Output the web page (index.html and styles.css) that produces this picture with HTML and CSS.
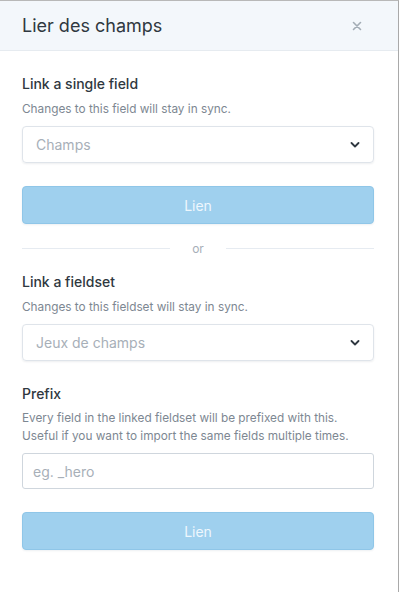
FILE: index.html
```html
<!DOCTYPE html>
<html lang="fr">
<head>
<meta charset="utf-8">
<title>Lier des champs</title>
<link rel="stylesheet" href="styles.css">
</head>
<body>
<div class="modal">
  <div class="modal-header">
    <h1 class="modal-title">Lier des champs</h1>
    <button class="close" aria-label="Fermer">
      <svg width="10" height="10" viewBox="0 0 10 10"><path d="M1.5 1.5 L8.5 8.5 M8.5 1.5 L1.5 8.5" stroke="#a3acb5" stroke-width="1.6" stroke-linecap="round" fill="none"/></svg>
    </button>
  </div>
  <div class="modal-body">
    <section class="group">
      <h2 class="label">Link a single field</h2>
      <p class="help">Changes to this field will stay in sync.</p>
      <div class="select">
        <span class="placeholder">Champs</span>
        <svg class="chev" width="10" height="6" viewBox="0 0 10 6"><path d="M1.5 1 L5 4.5 L8.5 1" stroke="#2f3840" stroke-width="1.8" fill="none" stroke-linecap="round" stroke-linejoin="round"/></svg>
      </div>
      <button class="btn">Lien</button>
    </section>

    <div class="divider"><span class="line"></span><span class="or">or</span><span class="line"></span></div>

    <section class="group">
      <h2 class="label">Link a fieldset</h2>
      <p class="help">Changes to this fieldset will stay in sync.</p>
      <div class="select">
        <span class="placeholder">Jeux de champs</span>
        <svg class="chev" width="10" height="6" viewBox="0 0 10 6"><path d="M1.5 1 L5 4.5 L8.5 1" stroke="#2f3840" stroke-width="1.8" fill="none" stroke-linecap="round" stroke-linejoin="round"/></svg>
      </div>
      <h2 class="label label-prefix">Prefix</h2>
      <p class="help help-multi">Every field in the linked fieldset will be prefixed with this.<br>Useful if you want to import the same fields multiple times.</p>
      <input class="input" type="text" placeholder="eg. _hero">
      <button class="btn">Lien</button>
    </section>
  </div>
</div>
</body>
</html>
```

FILE: styles.css
```css
* { box-sizing: border-box; }
html, body { margin: 0; padding: 0; background: #ffffff; }
body {
  font-family: Inter, "Noto Sans", "Liberation Sans", sans-serif;
  color: #2f3840;
  width: 399px;
  height: 592px;
  overflow: hidden;
}
.modal {
  width: 399px;
  height: 592px;
  border-top: 1px solid #b8b8b8;
  border-right: 1px solid #a9a9a9;
  background: #ffffff;
}
.modal-header {
  height: 50px;
  background: #f3f7fb;
  border-bottom: 1px solid #e6ebf0;
  display: flex;
  align-items: center;
  justify-content: space-between;
  padding: 0 36px 0 22px;
}
.modal-title {
  margin: 0;
  font-size: 18px;
  line-height: 24px;
  font-weight: 400;
  color: #2f3840;
}
.close {
  border: 0;
  background: none;
  padding: 0;
  width: 10px;
  height: 10px;
  display: flex;
}
.modal-body {
  padding: 23px 24px 23px 22px;
}
.group { display: flex; flex-direction: column; }
.label {
  margin: 0 0 6px;
  font-size: 14px;
  line-height: 20px;
  font-weight: 500;
  color: #2f3840;
}
.help {
  margin: 0 0 8px;
  font-size: 11.8px;
  line-height: 18px;
  color: #7d8792;
}
.select {
  height: 37px;
  border: 1px solid #dfe4ea;
  border-radius: 4px;
  box-shadow: 0 1px 2px rgba(30, 40, 60, 0.08);
  display: flex;
  align-items: center;
  justify-content: space-between;
  padding: 0 13px 0 13px;
}
.placeholder {
  font-size: 14px;
  color: #a7afb8;
}
.chev { display: block; }
.btn {
  margin-top: 23px;
  height: 38px;
  width: 100%;
  border: 1px solid #8fc6e8;
  border-radius: 4px;
  background: #9fd0ee;
  color: #eef7fd;
  font-family: inherit;
  font-size: 14px;
  box-shadow: 0 1px 2px rgba(30, 60, 90, 0.08);
}
.divider {
  display: flex;
  align-items: center;
  gap: 14px;
  margin: 12px 0;
  height: 24px;
}
.divider .line {
  flex: 1;
  height: 1px;
  background: #e6ebf1;
}
.or {
  font-size: 12px;
  color: #a7afb8;
  padding: 0 8px;
}
.label-prefix { margin-top: 23px; margin-bottom: 5px; }
.help-multi { margin-bottom: 8px; }
.input {
  height: 36px;
  border: 1px solid #cfd6dd;
  border-radius: 3px;
  padding: 0 10px;
  font-family: inherit;
  font-size: 14px;
  color: #2f3840;
  outline: none;
}
.input::placeholder { color: #a7afb8; }
```
